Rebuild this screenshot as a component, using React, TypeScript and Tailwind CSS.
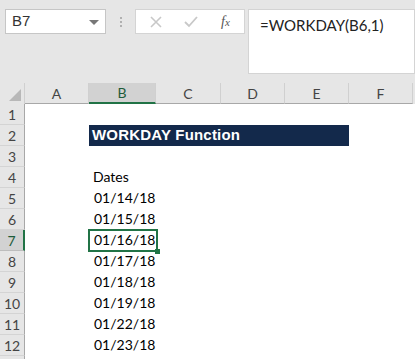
import React from "react";

const COLS = ["A", "B", "C", "D", "E", "F"];
const COL_WIDTHS = ["w-[64px]", "w-[67px]", "w-[65px]", "w-[64px]", "w-[64px]", "w-[64px]"];

const DATES = ["01/14/18", "01/15/18", "01/16/18", "01/17/18", "01/18/18", "01/19/18", "01/22/18", "01/23/18"];

const FormulaBar = () => (
  <div className="flex h-[83px] bg-[#e6e6e6] pt-[9px]">
    {/* name box */}
    <div className="ml-[5px] flex h-[25px] w-[101px] items-center justify-between border border-[#c6c6c6] bg-white pl-[6px] pr-[6px]">
      <span className="text-[15px] text-[#333]">B7</span>
      <span className="mt-[1px] h-0 w-0 border-x-[5px] border-t-[5px] border-x-transparent border-t-[#777]" />
    </div>
    <div className="ml-[14px] mt-[8px] flex h-[10px] flex-col justify-between">
      <span className="h-[2px] w-[2px] bg-[#b0b0b0]" />
      <span className="h-[2px] w-[2px] bg-[#b0b0b0]" />
      <span className="h-[2px] w-[2px] bg-[#b0b0b0]" />
    </div>
    <div className="ml-[13px] flex h-[25px] w-[110px] items-center border border-[#d4d4d4] bg-white">
      <svg width="12" height="12" viewBox="0 0 12 12" className="ml-[14px]">
        <path d="M1 1 L11 11 M11 1 L1 11" stroke="#c8c8c8" strokeWidth="1.6" />
      </svg>
      <svg width="14" height="12" viewBox="0 0 14 12" className="ml-[22px]">
        <path d="M1 6 L5 10 L13 1" stroke="#c8c8c8" strokeWidth="1.8" fill="none" />
      </svg>
      <span className="ml-[23px] font-['Liberation_Serif',serif] text-[14px] italic text-[#555]">
        f<span className="text-[11px]">x</span>
      </span>
    </div>
    <div className="ml-[3px] h-[65px] flex-1 border border-[#d4d4d4] bg-white pl-[11px] pt-[4px]">
      <span className="font-['Lato',sans-serif] text-[15px] text-[#222]">=WORKDAY(B6,1)</span>
    </div>
  </div>
);

const Cell = ({ row, col }: { row: number; col: number }) => {
  const w = COL_WIDTHS[col];
  if (row === 2 && col === 1) {
    return (
      <div className="flex h-[21px] w-[260px] items-center bg-[#13294b] pl-[3px] font-['Liberation_Sans',sans-serif] text-[15px] font-bold tracking-[0.2px] text-white">
        WORKDAY Function
      </div>
    );
  }
  if (row === 2 && col > 1 && col < 5) return null;
  let text = "";
  if (col === 1 && row === 4) text = "Dates";
  if (col === 1 && row >= 5 && row <= 12) text = DATES[row - 5];
  const selected = row === 7 && col === 1;
  return (
    <div className={`relative flex h-[21px] ${w} items-end pb-[1px] pl-[4px] font-['Lato',sans-serif] text-[14px] text-black`}>
      {text && <span className={row >= 5 ? "pl-[1px]" : ""}>{text}</span>}
      {selected && (
        <>
          <div className="absolute left-[-1px] top-[-1px] h-[23px] w-[70px] border-2 border-[#217346]" />
          <div className="absolute bottom-[-3px] right-[-4px] h-[5px] w-[5px] bg-[#217346]" />
        </>
      )}
    </div>
  );
};

const App = () => {
  const rows = Array.from({ length: 13 }, (_, i) => i + 1);
  return (
    <div className="h-[359px] w-[415px] overflow-hidden bg-white font-['Liberation_Sans',sans-serif]">
      <FormulaBar />
      {/* column headers */}
      <div className="flex h-[21px] bg-[#e6e6e6]">
        <div className="relative h-[21px] w-[25px] border-r border-[#d0d0d0]">
          <span className="absolute bottom-[3px] right-[3px] h-0 w-0 border-b-[12px] border-l-[12px] border-l-transparent border-b-[#b8b8b8]" />
        </div>
        {COLS.map((c, i) => (
          <div
            key={c}
            className={`flex h-[21px] ${COL_WIDTHS[i]} items-center justify-center border-r border-[#d0d0d0] font-['Lato',sans-serif] text-[14px] ${
              i === 1 ? "border-b-2 border-b-[#217346] bg-[#d2d2d2] text-[#1e5c3a]" : "border-b border-b-[#a8a8a8] text-[#444]"
            }`}
          >
            {c}
          </div>
        ))}
      </div>
      {rows.map((r) => (
        <div key={r} className="flex h-[21px]">
          <div
            className={`flex h-[21px] w-[25px] items-center justify-center border-b font-['Lato',sans-serif] text-[14px] ${
              r === 7
                ? "border-b-[#bdbdbd] border-r-2 border-r-[#217346] bg-[#d2d2d2] text-[#1e5c3a]"
                : "border-b-[#d4d4d4] border-r border-r-[#a8a8a8] bg-[#e6e6e6] text-[#444]"
            }`}
          >
            {r <= 12 ? r : ""}
          </div>
          {COLS.map((c, i) => (
            <Cell key={c} row={r} col={i} />
          ))}
        </div>
      ))}
    </div>
  );
};

export default App;
